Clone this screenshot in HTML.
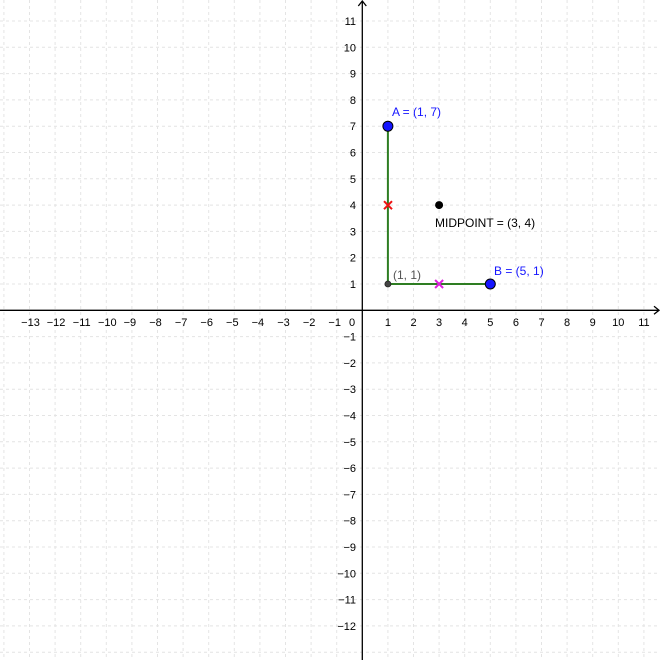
<!DOCTYPE html>
<html><head><meta charset="utf-8"><style>
html,body{margin:0;padding:0;background:#fff;width:660px;height:660px;overflow:hidden}
svg{display:block}
text{font-family:"Liberation Sans",sans-serif;font-size:11px}
text.pl{font-size:12px}
</style></head><body>
<svg width="660" height="660" viewBox="0 0 660 660" xmlns="http://www.w3.org/2000/svg">
<rect width="660" height="660" fill="#fff"/>
<g stroke="#e4e4e4" stroke-width="1" stroke-dasharray="3,3" fill="none">
<path d="M3.9 0V660M29.5 0V660M55.1 0V660M80.7 0V660M106.3 0V660M131.9 0V660M157.5 0V660M183.1 0V660M208.7 0V660M234.3 0V660M259.9 0V660M285.5 0V660M311.1 0V660M336.7 0V660M387.9 0V660M413.5 0V660M439.1 0V660M464.7 0V660M490.3 0V660M515.9 0V660M541.5 0V660M567.1 0V660M592.7 0V660M618.3 0V660M643.9 0V660"/>
<path d="M0 21H660M0 47.3H660M0 73.6H660M0 99.9H660M0 126.2H660M0 152.5H660M0 178.8H660M0 205.1H660M0 231.4H660M0 257.7H660M0 284H660M0 336.6H660M0 362.9H660M0 389.2H660M0 415.5H660M0 441.8H660M0 468.1H660M0 494.4H660M0 520.7H660M0 547H660M0 573.3H660M0 599.6H660M0 625.9H660M0 652.2H660"/>
</g>
<g stroke="#000" stroke-width="1.3" fill="none">
<path d="M362.3 660V1M0 310.3H659"/>
<path d="M358.3 6L362.3 1L366.3 6M654 306.3L659 310.3L654 314.3"/>
</g>
<g fill="#000" text-anchor="middle">
<text x="30.5" y="326">−13</text><text x="56.1" y="326">−12</text><text x="81.7" y="326">−11</text><text x="107.3" y="326">−10</text>
<text x="129.9" y="326">−9</text><text x="155.5" y="326">−8</text><text x="181.1" y="326">−7</text><text x="206.7" y="326">−6</text><text x="232.3" y="326">−5</text><text x="257.9" y="326">−4</text><text x="283.5" y="326">−3</text><text x="309.1" y="326">−2</text><text x="334.7" y="326">−1</text>
<text x="352" y="326">0</text>
<text x="387.9" y="326">1</text><text x="413.5" y="326">2</text><text x="439.1" y="326">3</text><text x="464.7" y="326">4</text><text x="490.3" y="326">5</text><text x="515.9" y="326">6</text><text x="541.5" y="326">7</text><text x="567.1" y="326">8</text><text x="592.7" y="326">9</text><text x="618.3" y="326">10</text><text x="643.9" y="326">11</text>
</g>
<g fill="#000" text-anchor="end">
<text x="356" y="25">11</text><text x="356" y="51.3">10</text><text x="356" y="77.6">9</text><text x="356" y="103.9">8</text><text x="356" y="130.2">7</text><text x="356" y="156.5">6</text><text x="356" y="182.8">5</text><text x="356" y="209.1">4</text><text x="356" y="235.4">3</text><text x="356" y="261.7">2</text><text x="356" y="288">1</text>
<text x="356" y="340.6">−1</text><text x="356" y="366.9">−2</text><text x="356" y="393.2">−3</text><text x="356" y="419.5">−4</text><text x="356" y="445.8">−5</text><text x="356" y="472.1">−6</text><text x="356" y="498.4">−7</text><text x="356" y="524.7">−8</text><text x="356" y="551">−9</text><text x="356" y="577.3">−10</text><text x="356" y="603.6">−11</text><text x="356" y="629.9">−12</text>
</g>
<path d="M387.9 126.2V284H490.3" stroke="#2e7d22" stroke-width="2" fill="none"/>
<path d="M384 201.2l8 8M392 201.2l-8 8" stroke="#ee1111" stroke-width="2"/>
<path d="M435.1 280l8 8M443.1 280l-8 8" stroke="#dd22dd" stroke-width="2"/>
<circle cx="387.9" cy="284" r="3" fill="#444" stroke="#222" stroke-width="0.8"/>
<circle cx="439.1" cy="205.1" r="4" fill="#000"/>
<circle cx="387.9" cy="126.2" r="5" fill="#1515ff" stroke="#000" stroke-width="1"/>
<circle cx="490.3" cy="284" r="5" fill="#1515ff" stroke="#000" stroke-width="1"/>
<text class="pl" x="392" y="116" fill="#1515ff">A = (1, 7)</text>
<text class="pl" x="494" y="275" fill="#1515ff">B = (5, 1)</text>
<text class="pl" x="393" y="279" fill="#555">(1, 1)</text>
<text class="pl" x="435" y="227" fill="#000">MIDPOINT = (3, 4)</text>
</svg>
</body></html>
